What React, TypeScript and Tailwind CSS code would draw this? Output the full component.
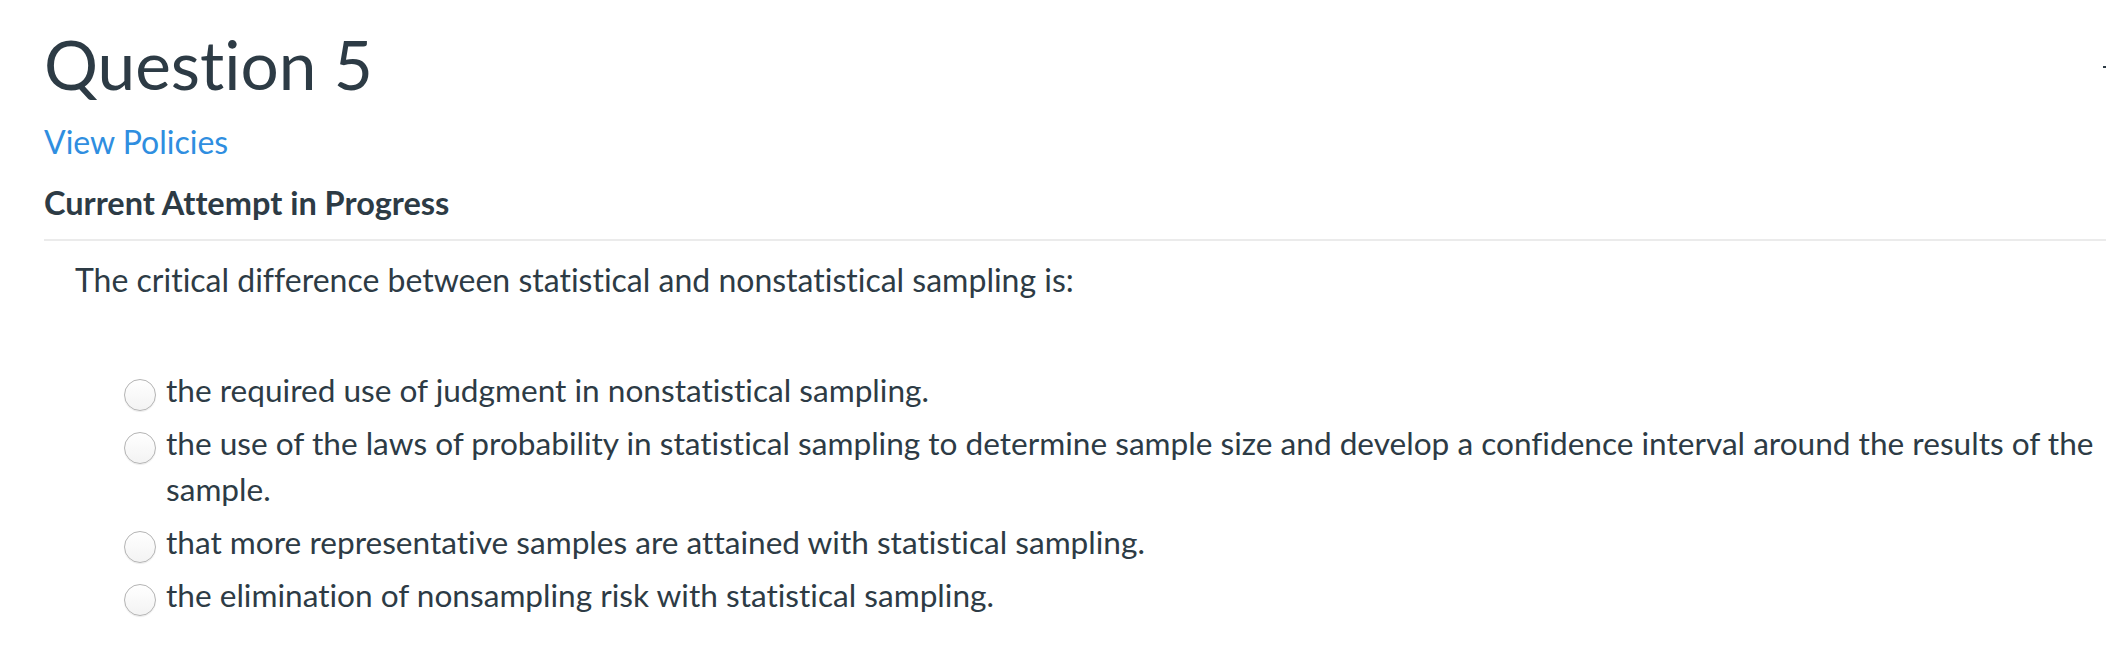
const options = [
  "the required use of judgment in nonstatistical sampling.",
  "the use of the laws of probability in statistical sampling to determine sample size and develop a confidence interval around the results of the sample.",
  "that more representative samples are attained with statistical sampling.",
  "the elimination of nonsampling risk with statistical sampling.",
];

function Radio() {
  return (
    <span className="mt-[12px] mr-[10px] h-[32px] w-[32px] shrink-0 rounded-full border border-[#b4b4b4] bg-gradient-to-b from-white to-[#f3f3f3] shadow-[0_1px_1px_rgba(0,0,0,0.08)]" />
  );
}

export default function App() {
  return (
    <div className="min-h-[668px] bg-white pl-[44px] pt-[23px] text-[#2d3b45] font-['Lato','Liberation_Sans',sans-serif] [font-variant-ligatures:no-common-ligatures]">
      <div className="flex items-start justify-between">
        <h1 className="text-[67.5px] leading-[1.2] font-normal">Question 5</h1>
        <span className="mt-[43px] h-[2px] w-[3px] bg-[#2d3b45]" />
      </div>
      <div className="mt-[19px]">
        <a href="#" className="text-[32px] leading-[1.2] text-[#2f8ee0]">
          View Policies
        </a>
      </div>
      <h2 className="mt-[22px] text-[32.5px] leading-[1.2] font-bold">Current Attempt in Progress</h2>
      <div className="mt-[17px] h-[2px] bg-[#ebebeb]" />
      <div className="pl-[31px] pt-[20px]">
        <p className="text-[32px] leading-[1.2]">
          The critical difference between statistical and nonstatistical sampling is:
        </p>
        <div className="mt-[67px] flex flex-col gap-[7px] pl-[49px]">
          {options.map((o) => (
            <label key={o} className="flex items-start">
              <Radio />
              <span className="text-[31.6px] leading-[46px]">{o}</span>
            </label>
          ))}
        </div>
      </div>
    </div>
  );
}
